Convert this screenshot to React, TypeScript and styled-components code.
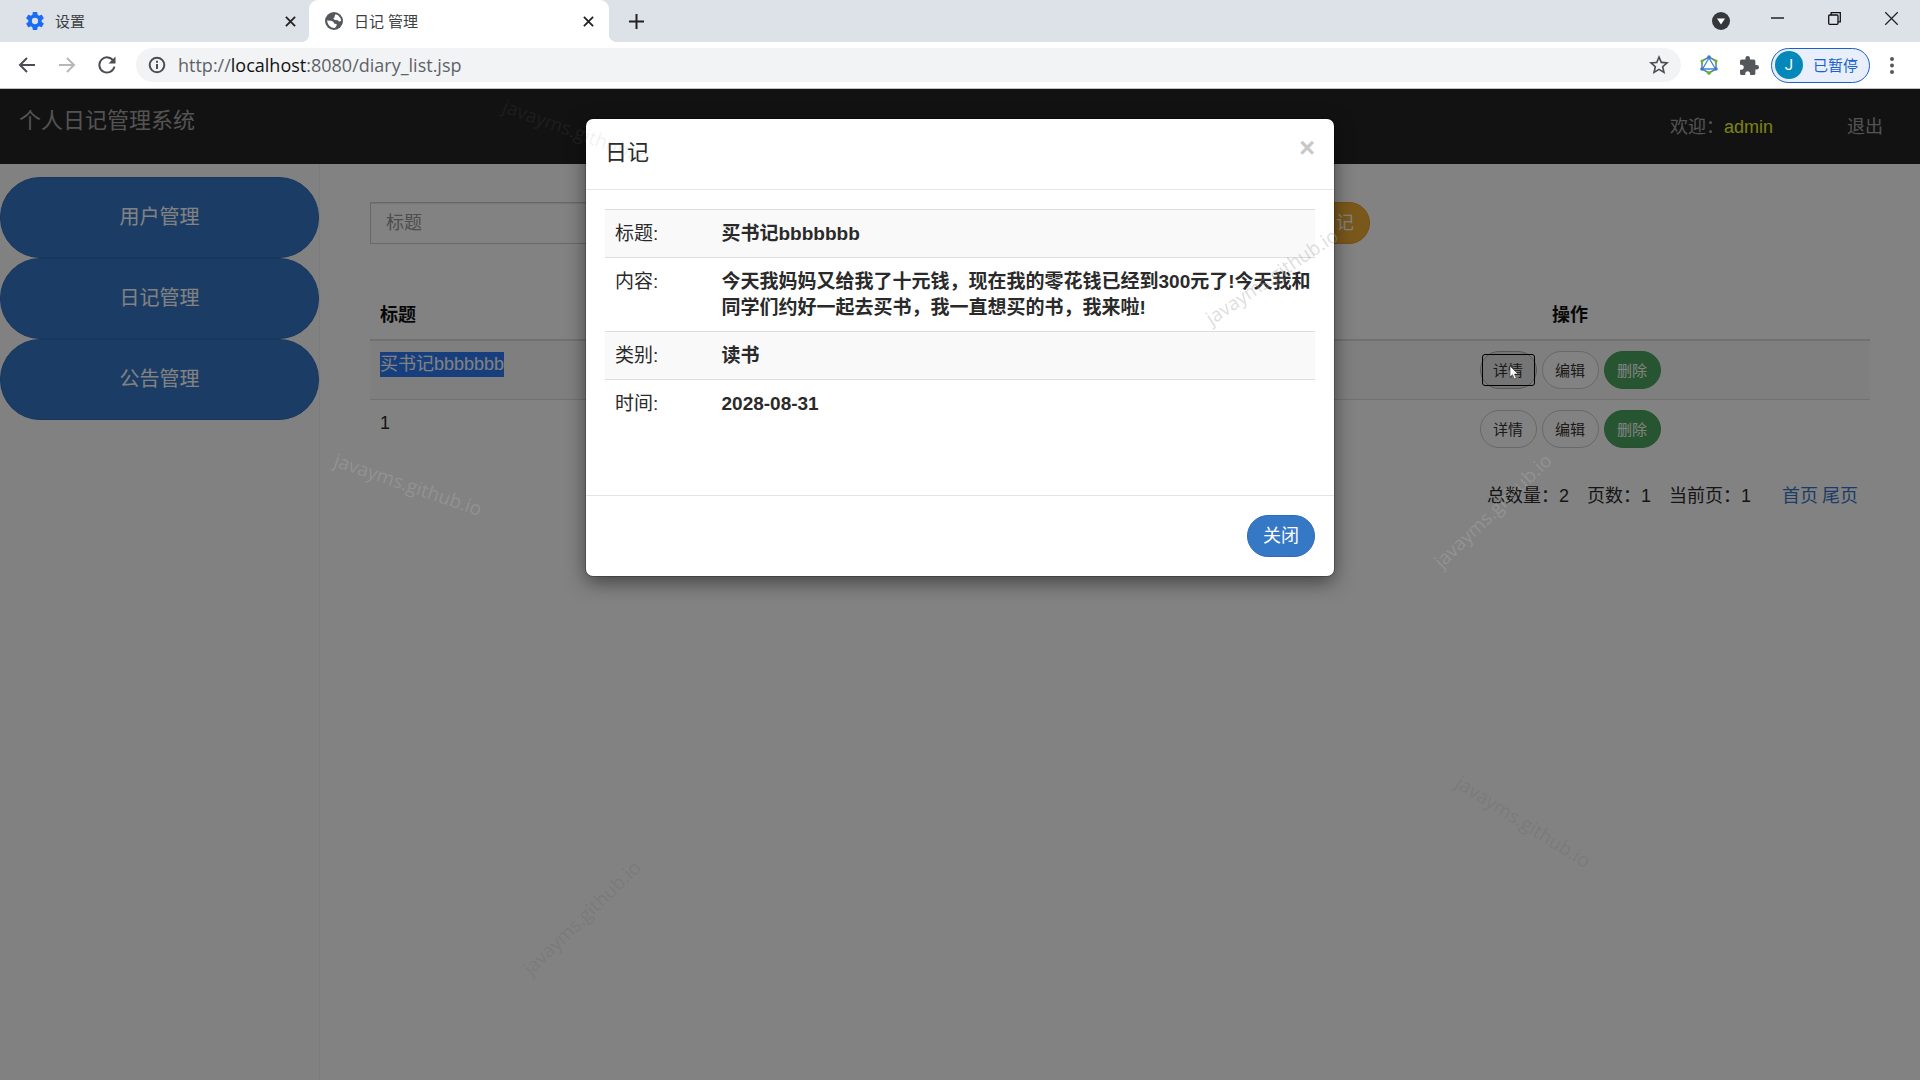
import React from "react";
import styled, { createGlobalStyle, css } from "styled-components";

const uiFont = `"Liberation Sans", "Noto Sans CJK SC", sans-serif`;
const chromeFont = `"Open Sans", "Noto Sans CJK SC", sans-serif`;

const GlobalStyle = createGlobalStyle`
  * { box-sizing: border-box; }
  body { margin: 0; font-family: ${uiFont}; font-size: 18px; line-height: 27px; color: #2a2a2a; }
  button, input { font: inherit; color: inherit; }
  button { cursor: pointer; }
  a { text-decoration: none; }
`;

const Shell = styled.div`
  display: flex;
  flex-direction: column;
  height: 100vh;
  overflow: hidden;
`;

/* ---------- browser frame ---------- */

const BrowserFrame = styled.header`
  font-family: ${chromeFont};
  color: #3c4043;
  border-bottom: 1px solid #bfc1c4;
`;

const TabStrip = styled.div`
  display: flex;
  height: 42px;
  background: #dde1e8;
`;

const Tab = styled.div<{ $active?: boolean; $width: number }>`
  display: flex;
  align-items: center;
  gap: 11px;
  width: ${(p) => p.$width}px;
  padding: 0 10px 0 ${(p) => (p.$active ? 16 : 26)}px;
  font-size: 15px;
  background: ${(p) => (p.$active ? "#fff" : "transparent")};
  border-radius: 9px 9px 0 0;
  position: relative;
  ${(p) =>
    p.$active &&
    css`
      &::before,
      &::after {
        content: "";
        position: absolute;
        bottom: 0;
        width: 8px;
        height: 8px;
      }
      &::before {
        right: 100%;
        background: radial-gradient(circle at 0 0, transparent 8px, #fff 8px);
      }
      &::after {
        left: 100%;
        background: radial-gradient(circle at 100% 0, transparent 8px, #fff 8px);
      }
    `}
`;

const TabTitle = styled.span`
  flex: 1;
`;

const IconButton = styled.button<{ $width?: number }>`
  display: flex;
  align-items: center;
  justify-content: center;
  width: ${(p) => p.$width ?? 28}px;
  padding: 0;
  border: 0;
  background: none;
  flex: none;
`;

const WindowControls = styled.div`
  display: flex;
  height: 36px;
  margin-left: auto;
`;

const Toolbar = styled.div`
  display: flex;
  align-items: center;
  height: 46px;
  padding: 0 14px 0 12px;
`;

const NavButtons = styled.div`
  display: flex;
  gap: 10px;
  margin-right: 14px;
`;

const AddressBar = styled.div`
  display: flex;
  align-items: center;
  flex: 1;
  height: 34px;
  padding: 0 8px 0 12px;
  border-radius: 17px;
  background: #f1f3f4;
`;

const Address = styled.div`
  flex: 1;
  margin-left: 12px;
  font-size: 18px;
  color: #5f6368;
  b {
    font-weight: 400;
    color: #111;
  }
`;

const Extensions = styled.div`
  display: flex;
  gap: 12px;
  margin: 0 8px 0 14px;
`;

const Profile = styled.button`
  display: flex;
  align-items: center;
  gap: 10px;
  width: 99px;
  height: 35px;
  padding: 0 3px;
  margin-right: 8px;
  border: 1px solid #1a5fd0;
  border-radius: 18px;
  background: #e8effb;
  color: #1a62d0;
  font-size: 15px;
  white-space: nowrap;
`;

const Avatar = styled.span`
  display: grid;
  place-items: center;
  flex: none;
  width: 28px;
  height: 28px;
  border-radius: 50%;
  background: #0488ba;
  color: #fff;
  font-family: Roboto, sans-serif;
`;

/* ---------- page ---------- */

const Viewport = styled.div`
  position: relative;
  display: flex;
  flex-direction: column;
  flex: 1;
  overflow: hidden;
  background: #fff;
`;

const Navbar = styled.nav`
  display: flex;
  justify-content: space-between;
  align-items: center;
  height: 75px;
  padding: 0 37px 0 19px;
  background: #242424;
  color: #a4a4a4;
`;

const Brand = styled.a`
  padding-bottom: 12px;
  font-size: 22px;
  color: inherit;
`;

const UserArea = styled.div`
  display: flex;
  gap: 74px;
  padding-top: 2px;
`;

const UserName = styled.span`
  color: #f0ff2c;
`;

const Logout = styled.a`
  color: inherit;
`;

const Body = styled.div`
  display: flex;
  flex: 1;
`;

const Sidebar = styled.aside`
  display: flex;
  flex-direction: column;
  width: 320px;
  padding-top: 13px;
  background: #fdfdfd;
  border-right: 1px solid #f4f4f4;
`;

const MenuButton = styled.button`
  height: 81px;
  border: 1px solid #2f6db6;
  border-radius: 40px;
  background: #3578c6;
  color: #fff;
  font-size: 20px;
`;

const Content = styled.main`
  flex: 1;
  padding: 38px 50px;
`;

const SearchRow = styled.form`
  display: flex;
  justify-content: space-between;
  width: 1000px;
  max-width: 100%;
`;

const SearchInput = styled.input`
  width: 260px;
  height: 42px;
  padding: 0 15px;
  border: 1px solid #ccc;
  background: #fff;
  box-shadow: inset 0 1px 1px rgba(0, 0, 0, 0.1);
  &::placeholder {
    color: #999;
  }
`;

const pill = css`
  border: 1px solid;
  border-radius: 22px;
  white-space: nowrap;
`;

const AddButton = styled.button`
  ${pill}
  height: 42px;
  padding: 0 15px;
  border-color: #e89a1c;
  background: #f0ad36;
  color: #fff;
`;

const DiaryTable = styled.table`
  width: 100%;
  margin: 48px 0 25px;
  border-collapse: separate;
  border-spacing: 0;
  table-layout: fixed;
  th,
  td {
    padding: 10px;
    text-align: left;
    vertical-align: top;
  }
  th {
    color: #111;
    border-bottom: 2px solid #ddd;
  }
  td {
    height: 58px;
  }
  tbody tr + tr td {
    border-top: 1px solid #ddd;
  }
  tbody tr:nth-child(odd) {
    background: #f9f9f9;
  }
  th:last-child,
  td:last-child {
    width: 40%;
    text-align: center;
  }
`;

const Selected = styled.span`
  display: inline-block;
  line-height: 25px;
  background: #2f7cf6;
  color: #fff;
`;

const Actions = styled.div`
  display: flex;
  justify-content: center;
  gap: 5px;
`;

const ActionButton = styled.button<{ $danger?: boolean; $focused?: boolean }>`
  ${pill}
  position: relative;
  width: 57px;
  height: 38px;
  padding: 0;
  font-size: 15px;
  border-color: ${(p) => (p.$danger ? "#4aa35c" : p.$focused ? "#adadad" : "#ccc")};
  background: ${(p) => (p.$danger ? "#4ea860" : p.$focused ? "#e6e6e6" : "#fff")};
  color: ${(p) => (p.$danger ? "#fff" : "#333")};
  ${(p) =>
    p.$focused &&
    css`
      &::after {
        content: "";
        position: absolute;
        inset: 2px 1px;
        border: 1px solid #000;
        border-radius: 3px;
      }
    `}
`;

const Pagination = styled.footer`
  display: flex;
  justify-content: flex-end;
  gap: 18px;
  padding-right: 12px;
`;

const PageLinks = styled.span`
  display: flex;
  gap: 4px;
  margin-left: 13px;
  a {
    color: #3578c6;
  }
`;

/* ---------- dialog ---------- */

const Backdrop = styled.div`
  position: absolute;
  inset: 0;
  display: flex;
  align-items: flex-start;
  justify-content: center;
  padding-top: 30px;
  background: rgba(0, 0, 0, 0.49);
`;

const Dialog = styled.section`
  width: 748px;
  max-width: 100%;
  border-radius: 7px;
  background: #fff;
  box-shadow: 0 6px 19px rgba(0, 0, 0, 0.5), 0 0 0 1px rgba(0, 0, 0, 0.2);
`;

const DialogHeader = styled.div`
  display: flex;
  justify-content: space-between;
  height: 71px;
  padding: 19px;
  border-bottom: 1px solid #e5e5e5;
`;

const DialogTitle = styled.h4`
  margin: 0;
  font-size: 22px;
  line-height: 30px;
  font-weight: 400;
`;

const CloseIcon = styled.button`
  height: 20px;
  padding: 0;
  border: 0;
  background: none;
  color: #c8c8c8;
  font-size: 27px;
  line-height: 20px;
  font-weight: 700;
`;

const DialogBody = styled.div`
  padding: 19px 19px 68px;
`;

const DetailTable = styled.table`
  width: 100%;
  border-collapse: separate;
  border-spacing: 0;
  font-size: 19px;
  line-height: 26px;
  th,
  td {
    padding: 11px 4px 10px 10px;
    border-top: 1px solid #ddd;
    text-align: left;
    vertical-align: top;
  }
  th {
    width: 15%;
    font-weight: 400;
  }
  td {
    font-weight: 700;
  }
  tr:nth-child(odd) {
    background: #f9f9f9;
  }
`;

const DialogFooter = styled.div`
  display: flex;
  justify-content: flex-end;
  padding: 19px;
  border-top: 1px solid #e5e5e5;
`;

const CloseButton = styled.button`
  ${pill}
  height: 42px;
  padding: 0 15px;
  border-color: #2e6bb4;
  background: #3578c6;
  color: #fff;
`;

/* ---------- overlays ---------- */

const Overlay = styled.div`
  position: absolute;
  inset: 0;
  pointer-events: none;
`;

const Watermark = styled.span<{ $x: number; $y: number; $angle: number; $color: string }>`
  position: absolute;
  left: ${(p) => p.$x}px;
  top: ${(p) => p.$y}px;
  transform: translate(-50%, -50%) rotate(${(p) => p.$angle}deg);
  font-family: ${chromeFont};
  font-size: 19px;
  color: ${(p) => p.$color};
`;

const Pointer = styled.svg`
  position: absolute;
  left: 1509px;
  top: 276px;
`;

/* ---------- icons ---------- */

const stroke = { fill: "none", stroke: "#4a4d51", strokeWidth: 2 } as const;

const CrossIcon = ({ size = 11, width = 2 }) => (
  <svg width={size} height={size} viewBox="0 0 12 12" stroke="#222" strokeWidth={width} fill="none">
    <path d="M1 1l10 10M11 1L1 11" />
  </svg>
);

const GearIcon = () => (
  <svg width="18" height="18" viewBox="2 2 20 20" fill="#1a6cf5">
    <path d="M19.43 12.98c.04-.32.07-.64.07-.98s-.03-.66-.07-.98l2.11-1.65c.19-.15.24-.42.12-.64l-2-3.46c-.12-.22-.39-.3-.61-.22l-2.49 1c-.52-.4-1.08-.73-1.69-.98l-.38-2.65C14.46 2.18 14.25 2 14 2h-4c-.25 0-.46.18-.49.42l-.38 2.65c-.61.25-1.17.59-1.69.98l-2.49-1c-.23-.09-.49 0-.61.22l-2 3.46c-.13.22-.07.49.12.64l2.11 1.65c-.04.32-.07.65-.07.98s.03.66.07.98l-2.11 1.65c-.19.15-.24.42-.12.64l2 3.46c.12.22.39.3.61.22l2.49-1c.52.4 1.08.73 1.69.98l.38 2.65c.03.24.24.42.49.42h4c.25 0 .46-.18.49-.42l.38-2.65c.61-.25 1.17-.59 1.69-.98l2.49 1c.23.09.49 0 .61-.22l2-3.46c.12-.22.07-.49-.12-.64l-2.11-1.65zM12 15.5a3.5 3.5 0 1 1 0-7 3.5 3.5 0 0 1 0 7z" />
  </svg>
);

const GlobeIcon = () => (
  <svg width="18" height="18" viewBox="0 0 18 18">
    <circle cx="9" cy="9" r="9" fill="#54585d" />
    <path
      fill="#fff"
      d="M10.5 2.2L13 3.2Q16 5.500 16.200 9L14 9.600Q12.800 7.600 11 8.200Q8.500 7.800 8.300 6.200Q10 5.800 9.600 4.200zM1.900 8.600L6 8.800Q9 9.400 9.200 11.600L11.800 12.200Q11.800 14.400 9.800 16Q3.500 16.200 1.900 8.600z"
    />
  </svg>
);

const ArrowIcon = ({ forward = false }) => (
  <svg width="18" height="16" viewBox="0 0 18 16" {...stroke} stroke={forward ? "#b5b7ba" : "#4a4d51"}>
    <path d={forward ? "M1 8h15M9 1l7 7-7 7" : "M17 8H2M9 1L2 8l7 7"} />
  </svg>
);

const ReloadIcon = () => (
  <svg width="18" height="18" viewBox="0 0 18 18" {...stroke}>
    <path d="M15.600 5.200A7.600 7.600 0 1 0 16.400 10.600" />
    <path d="M17.500 0.500v7h-7z" fill="#4a4d51" stroke="none" />
  </svg>
);

const InfoIcon = () => (
  <svg width="18" height="18" viewBox="0 0 18 18" {...stroke}>
    <circle cx="9" cy="9" r="7.300" />
    <path d="M9 8v5M9 4.700v2" />
  </svg>
);

const StarIcon = () => (
  <svg width="20" height="20" viewBox="2 2 20 20" fill="#4a4d51">
    <path d="M22 9.240l-7.190-.62L12 2 9.190 8.630 2 9.240l5.460 4.730L5.820 21 12 17.270 18.180 21l-1.630-7.030L22 9.240zM12 15.400l-3.760 2.270 1-4.280-3.320-2.880 4.380-.38L12 6.100l1.710 4.040 4.380.38-3.320 2.880 1 4.280L12 15.400z" />
  </svg>
);

const HexIcon = () => (
  <svg width="20" height="20" viewBox="0 0 20 20" fill="none">
    <path d="M10 2l7 4v8l-7 4-7-4V6z" stroke="#6d7a80" strokeWidth="1.500" />
    <path d="M10 3l6.500 11h-13z" stroke="#3a86e0" strokeWidth="1.300" />
    <path d="M3 5v4M17 5v4M8 17l2 1.500 2-1.500" stroke="#69b53a" strokeWidth="1.800" />
    <g fill="#2f7fe0">
      <circle cx="10" cy="2" r="1.800" />
      <circle cx="3" cy="14" r="1.800" />
      <circle cx="17" cy="14" r="1.800" />
    </g>
    <g fill="#5fb336">
      <circle cx="3" cy="6" r="1.600" />
      <circle cx="17" cy="6" r="1.600" />
      <circle cx="10" cy="18" r="1.700" />
    </g>
  </svg>
);

const PuzzleIcon = () => (
  <svg width="19" height="19" viewBox="2 1 21 21" fill="#54585d">
    <path d="M20.500 11H19V7c0-1.100-.9-2-2-2h-4V3.500a2.500 2.500 0 0 0-5 0V5H4c-1.100 0-1.990.9-1.990 2v3.800H3.500c1.490 0 2.700 1.210 2.700 2.700s-1.210 2.700-2.700 2.700H2V20c0 1.100.9 2 2 2h3.800v-1.500c0-1.490 1.210-2.700 2.700-2.700s2.700 1.210 2.700 2.700V22H17c1.100 0 2-.9 2-2v-4h1.500a2.500 2.500 0 0 0 0-5z" />
  </svg>
);

const DotsIcon = () => (
  <svg width="4" height="17" viewBox="0 0 4 17" fill="#54585d">
    <circle cx="2" cy="2" r="2" />
    <circle cx="2" cy="8.500" r="2" />
    <circle cx="2" cy="15" r="2" />
  </svg>
);

/* ---------- data ---------- */

const menu = ["用户管理", "日记管理", "公告管理"];

const diaries = [
  { title: "买书记bbbbbbb", selected: true },
  { title: "1", selected: false },
];

const details = [
  ["标题:", "买书记bbbbbbb"],
  ["内容:", "今天我妈妈又给我了十元钱，现在我的零花钱已经到300元了!今天我和同学们约好一起去买书，我一直想买的书，我来啦!"],
  ["类别:", "读书"],
  ["时间:", "2028-08-31"],
];

const light = "rgba(190, 190, 190, 0.28)";
const dark = "rgba(70, 70, 70, 0.14)";
const watermarks = [
  { x: 576, y: 43, angle: 20, color: "rgba(128, 128, 128, 0.12)" },
  { x: 408, y: 396, angle: 19, color: light },
  { x: 1272, y: 188, angle: -34, color: "rgba(160, 160, 160, 0.36)" },
  { x: 1493, y: 422, angle: -44, color: light },
  { x: 582, y: 829, angle: -44, color: dark },
  { x: 1523, y: 733, angle: 32, color: dark },
];

export default function App() {
  return (
    <Shell lang="zh-CN">
      <GlobalStyle />
      <BrowserFrame>
        <TabStrip>
          <Tab $width={309}>
            <GearIcon />
            <TabTitle>设置</TabTitle>
            <IconButton $width={18} aria-label="关闭标签页">
              <CrossIcon />
            </IconButton>
          </Tab>
          <Tab $width={300} $active>
            <GlobeIcon />
            <TabTitle>日记 管理</TabTitle>
            <IconButton $width={22} aria-label="关闭标签页">
              <CrossIcon />
            </IconButton>
          </Tab>
          <IconButton $width={54} aria-label="新标签页">
            <svg width="15" height="15" viewBox="0 0 15 15" stroke="#222" strokeWidth="2">
              <path d="M7.500 0v15M0 7.500h15" />
            </svg>
          </IconButton>
          <WindowControls>
            <IconButton $width={57} aria-label="搜索标签页">
              <svg width="18" height="24" viewBox="0 -6 18 24">
                <circle cx="9" cy="9" r="9" fill="#34383d" />
                <path d="M5 6.500h8L9 12.500z" fill="#fff" />
              </svg>
            </IconButton>
            <IconButton $width={57} aria-label="最小化">
              <svg width="13" height="2" viewBox="0 0 13 2">
                <path d="M0 1h13" stroke="#222" strokeWidth="1.500" />
              </svg>
            </IconButton>
            <IconButton $width={57} aria-label="还原">
              <svg width="13" height="13" viewBox="0 0 13 13" fill="none" stroke="#111" strokeWidth="1.300">
                <rect x="0.700" y="3" width="9.300" height="9.300" rx="1" />
                <path d="M3.200 3V0.700H12.300v9.100H10" />
              </svg>
            </IconButton>
            <IconButton $width={57} aria-label="关闭窗口">
              <CrossIcon size={15} width={1} />
            </IconButton>
          </WindowControls>
        </TabStrip>
        <Toolbar>
          <NavButtons>
            <IconButton $width={30} aria-label="后退">
              <ArrowIcon />
            </IconButton>
            <IconButton $width={30} aria-label="前进">
              <ArrowIcon forward />
            </IconButton>
            <IconButton $width={30} aria-label="重新加载">
              <ReloadIcon />
            </IconButton>
          </NavButtons>
          <AddressBar>
            <IconButton $width={18} aria-label="网站信息">
              <InfoIcon />
            </IconButton>
            <Address role="textbox" aria-label="地址">
              http://<b>localhost</b>:8080/diary_list.jsp
            </Address>
            <IconButton aria-label="收藏">
              <StarIcon />
            </IconButton>
          </AddressBar>
          <Extensions>
            <IconButton aria-label="扩展">
              <HexIcon />
            </IconButton>
            <IconButton aria-label="扩展程序">
              <PuzzleIcon />
            </IconButton>
          </Extensions>
          <Profile>
            <Avatar>J</Avatar>
            已暂停
          </Profile>
          <IconButton aria-label="菜单">
            <DotsIcon />
          </IconButton>
        </Toolbar>
      </BrowserFrame>

      <Viewport>
        <Navbar>
          <Brand href="#">个人日记管理系统</Brand>
          <UserArea>
            <span>
              欢迎：<UserName>admin</UserName>
            </span>
            <Logout href="#">退出</Logout>
          </UserArea>
        </Navbar>
        <Body>
          <Sidebar>
            {menu.map((item) => (
              <MenuButton key={item}>{item}</MenuButton>
            ))}
          </Sidebar>
          <Content>
            <SearchRow>
              <SearchInput placeholder="标题" aria-label="标题" />
              <AddButton type="button">添加日记</AddButton>
            </SearchRow>
            <DiaryTable>
              <thead>
                <tr>
                  <th>标题</th>
                  <th>操作</th>
                </tr>
              </thead>
              <tbody>
                {diaries.map((d) => (
                  <tr key={d.title}>
                    <td>{d.selected ? <Selected>{d.title}</Selected> : d.title}</td>
                    <td>
                      <Actions>
                        <ActionButton $focused={d.selected}>详情</ActionButton>
                        <ActionButton>编辑</ActionButton>
                        <ActionButton $danger>删除</ActionButton>
                      </Actions>
                    </td>
                  </tr>
                ))}
              </tbody>
            </DiaryTable>
            <Pagination>
              <span>总数量：2</span>
              <span>页数：1</span>
              <span>当前页：1</span>
              <PageLinks>
                <a href="#">首页</a>
                <a href="#">尾页</a>
              </PageLinks>
            </Pagination>
          </Content>
        </Body>

        <Backdrop>
          <Dialog role="dialog" aria-labelledby="diary-title">
            <DialogHeader>
              <DialogTitle id="diary-title">日记</DialogTitle>
              <CloseIcon aria-label="关闭">×</CloseIcon>
            </DialogHeader>
            <DialogBody>
              <DetailTable>
                <tbody>
                  {details.map(([label, value]) => (
                    <tr key={label}>
                      <th scope="row">{label}</th>
                      <td>{value}</td>
                    </tr>
                  ))}
                </tbody>
              </DetailTable>
            </DialogBody>
            <DialogFooter>
              <CloseButton>关闭</CloseButton>
            </DialogFooter>
          </Dialog>
        </Backdrop>

        <Overlay aria-hidden="true">
          {watermarks.map((w) => (
            <Watermark key={`${w.x}-${w.y}`} $x={w.x} $y={w.y} $angle={w.angle} $color={w.color}>
              javayms.github.io
            </Watermark>
          ))}
          <Pointer width="10" height="15" viewBox="0 0 10 15">
            <path d="M1 1v11l2.500-2.300L5.300 14l2-.9-1.800-4H9z" fill="#fff" stroke="#333" strokeWidth="0.600" />
          </Pointer>
        </Overlay>
      </Viewport>
    </Shell>
  );
}
